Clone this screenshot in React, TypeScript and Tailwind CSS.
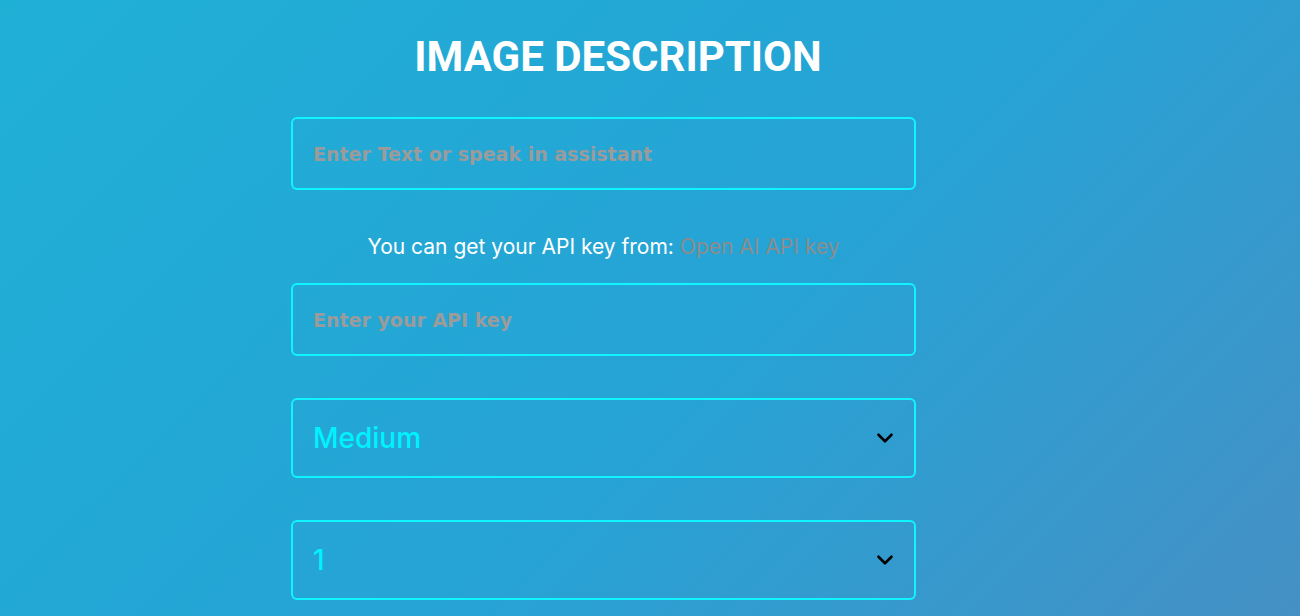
import { ChevronDown } from "lucide-react";

const inputClass =
    "w-full h-[73px] rounded-[6px] border-2 border-[#0ff4ff] bg-transparent px-5 text-[19px] font-bold text-[#9b9b9b] placeholder:text-[#9b9b9b] outline-none [font-family:'Comic_Sans_MS','DejaVu_Sans',sans-serif]";

const Select = ({value}: {value: string}) => (
    <div className="w-full h-[80px] rounded-[6px] border-2 border-[#0ff4ff] flex items-center justify-between pl-5 pr-4">
        <span className="text-[28px] font-medium text-[#00f2ff] [font-family:Inter,sans-serif]">{value}</span>
        <ChevronDown size={26} strokeWidth={2.4} className="text-black"/>
    </div>
);

export default function App() {
    return (
        <div className="min-h-[616px] w-full bg-[linear-gradient(135deg,#1fb0d6_0%,#26a3d5_55%,#4590c5_100%)] flex flex-col items-center">
            <h1 className="mt-[32px] mr-[64px] text-[42px] font-bold text-white leading-[1.2] [font-family:Roboto,sans-serif]">
                IMAGE DESCRIPTION
            </h1>
            <div className="w-[625px] mt-[35px] mr-[93px] flex flex-col">
                <input className={inputClass} placeholder="Enter Text or speak in assistant"/>
                <p className="mt-[43px] text-center text-[21px] leading-[28px] text-white [font-family:Inter,sans-serif]">
                    You can get your API key from: <a className="text-[#8c8c8c]">Open AI API key</a>
                </p>
                <input className={`${inputClass} mt-[22px]`} placeholder="Enter your API key"/>
                <div className="mt-[42px]">
                    <Select value="Medium"/>
                </div>
                <div className="mt-[42px]">
                    <Select value="1"/>
                </div>
            </div>
        </div>
    );
}
